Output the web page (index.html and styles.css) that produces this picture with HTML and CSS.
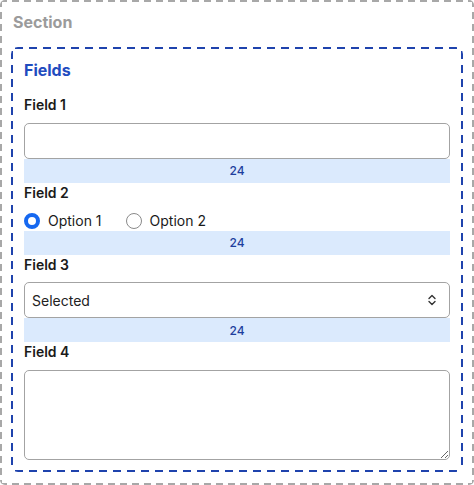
FILE: index.html
```html
<!DOCTYPE html>
<html>
<head>
<meta charset="utf-8">
<link rel="stylesheet" href="styles.css">
</head>
<body>
<div class="section">
  <div class="section-title">Section</div>
  <div class="fields">
    <div class="fields-title">Fields</div>
    <label class="label">Field 1</label>
    <input class="input" type="text">
    <div class="spacer">24</div>
    <label class="label">Field 2</label>
    <div class="radios">
      <label class="radio-opt"><input type="radio" name="r" class="radio" checked><span>Option 1</span></label>
      <label class="radio-opt"><input type="radio" name="r" class="radio"><span>Option 2</span></label>
    </div>
    <div class="spacer">24</div>
    <label class="label">Field 3</label>
    <div class="select">
      <span>Selected</span>
      <svg class="chev" width="10" height="14" viewBox="0 0 10 14"><path d="M2 5.5 L5 2.5 L8 5.5 M2 8.5 L5 11.5 L8 8.5" fill="none" stroke="#333" stroke-width="1.4" stroke-linecap="round" stroke-linejoin="round"/></svg>
    </div>
    <div class="spacer">24</div>
    <label class="label">Field 4</label>
    <textarea class="textarea"></textarea>
  </div>
</div>
</body>
</html>
```
FILE: styles.css
```css
* { box-sizing: border-box; }
html, body { margin: 0; padding: 0; background: #fff; }
body { font-family: Inter, "Noto Sans", sans-serif; color: #1a1a1a; }
.section {
  width: 474px;
  height: 485px;
  border: 2px solid transparent;
  border-radius: 5px;
  background-origin: border-box;
  background-clip: border-box;
  background-image:
    linear-gradient(90deg, #a8a8a8 7px, transparent 7px),
    linear-gradient(90deg, #a8a8a8 7px, transparent 7px),
    linear-gradient(180deg, #a8a8a8 7px, transparent 7px),
    linear-gradient(180deg, #a8a8a8 7px, transparent 7px);
  background-size: 12px 2px, 12px 2px, 2px 12px, 2px 12px;
  background-position: 0 0, 0 100%, 0 0, 100% 0;
  background-repeat: repeat-x, repeat-x, repeat-y, repeat-y;
  padding: 10px 9px 11px;
  display: flex;
  flex-direction: column;
}
.section-title {
  font-size: 16px;
  line-height: 20px;
  font-weight: 700;
  color: #9b9b9b;
  padding-left: 2px;
  margin-bottom: 15px;
}
.fields {
  flex: 1;
  border: 2px solid transparent;
  border-radius: 7px;
  background-origin: border-box;
  background-clip: border-box;
  background-image:
    linear-gradient(90deg, #1f43ad 8px, transparent 8px),
    linear-gradient(90deg, #1f43ad 8px, transparent 8px),
    linear-gradient(180deg, #1f43ad 8px, transparent 8px),
    linear-gradient(180deg, #1f43ad 8px, transparent 8px);
  background-size: 14px 2px, 14px 2px, 2px 14px, 2px 14px;
  background-position: 4px 0, 4px 100%, 0 4px, 100% 4px;
  background-repeat: repeat-x, repeat-x, repeat-y, repeat-y;
  padding: 11px 11px 10px;
  display: flex;
  flex-direction: column;
}
.fields-title {
  font-size: 16px;
  line-height: 20px;
  font-weight: 700;
  color: #1f4cbf;
  margin-bottom: 15.4px;
}
.label {
  display: block;
  font-size: 14px;
  line-height: 19.6px;
  font-weight: 600;
  color: #1a1a1a;
  margin-bottom: 8px;
}
.input, .select, .textarea {
  width: 100%;
  border: 1px solid #a3a3a3;
  border-radius: 5px;
  background: #fff;
  font-family: inherit;
  font-size: 14px;
  margin: 0;
}
.input { height: 36px; display: block; }
.select {
  height: 36px;
  display: flex;
  align-items: center;
  justify-content: space-between;
  padding: 0 12px 0 7px;
  color: #222;
}
.chev { display: block; }
.textarea { height: 90px; display: block; resize: vertical; }
.spacer {
  height: 24px;
  background: #dbeafd;
  color: #1e3f9e;
  font-size: 12px;
  font-weight: 500;
  display: flex;
  align-items: center;
  justify-content: center;
}
.radios {
  height: 20px;
  display: flex;
  align-items: center;
  gap: 24px;
}
.radio-opt {
  display: flex;
  align-items: center;
  gap: 8px;
  font-size: 14px;
  color: #1a1a1a;
}
.radio {
  appearance: none;
  -webkit-appearance: none;
  margin: 0;
  width: 16px;
  height: 16px;
  border-radius: 50%;
  border: 1px solid #8a8a8a;
  background: #fff;
}
.radio:checked {
  border: 4.5px solid #1668f0;
  background: #fff;
}
```
